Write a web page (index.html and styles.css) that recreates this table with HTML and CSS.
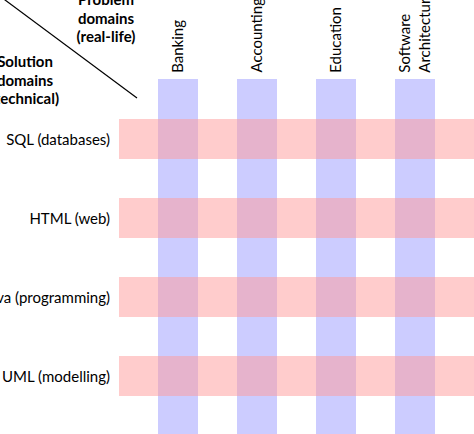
FILE: index.html
```html
<!DOCTYPE html>
<html lang="en">
<head>
<meta charset="utf-8">
<title>Problem vs solution domains</title>
<link rel="stylesheet" href="styles.css">
</head>
<body>
<div class="chart">
  <div class="corner">
    <svg class="diag" width="140" height="100" viewBox="0 0 140 100" aria-hidden="true">
      <line x1="-1" y1="-4.5" x2="137" y2="98" stroke="#000" stroke-width="1.2"/>
    </svg>
    <div class="head head-problem">Problem<br>domains<br>(real-life)</div>
    <div class="head head-solution">Solution<br>domains<br>(technical)</div>
  </div>
  <div class="col-heads">
    <div class="col-head"><span>Banking</span></div>
    <div class="col-head"><span>Accounting</span></div>
    <div class="col-head"><span>Education</span></div>
    <div class="col-head"><span>Software<br>Architecture</span></div>
  </div>
  <div class="row-heads">
    <div class="row-head">SQL (databases)</div>
    <div class="row-head">HTML (web)</div>
    <div class="row-head">Java (programming)</div>
    <div class="row-head">UML (modelling)</div>
  </div>
  <div class="matrix">
    <div class="cols">
      <div class="col"></div>
      <div class="col"></div>
      <div class="col"></div>
      <div class="col"></div>
    </div>
    <div class="rows">
      <div class="row"></div>
      <div class="row"></div>
      <div class="row"></div>
      <div class="row"></div>
    </div>
  </div>
</div>
</body>
</html>
```

FILE: styles.css
```css
html, body {
  margin: 0;
  background: #fff;
}
body {
  font-family: Lato, "DejaVu Sans", sans-serif;
  color: #000;
  overflow: hidden;
  width: 474px;
  height: 434px;
}
.chart {
  display: grid;
  grid-template-columns: 119px 355px;
  grid-template-rows: 79px 355px;
}
.corner {
  position: relative;
  height: 79px;
  display: flex;
  flex-direction: column;
  align-items: flex-start;
}
.diag {
  position: absolute;
  left: 0;
  top: 0;
  overflow: visible;
}
.head {
  font-weight: bold;
  font-size: 15px;
  line-height: 18.5px;
  text-align: center;
  width: 90px;
  white-space: nowrap;
  flex-shrink: 0;
}
.head-problem {
  margin-top: -10px;
  margin-left: 61px;
}
.head-solution {
  margin-top: 6.5px;
  margin-left: -20px;
}
.col-heads {
  display: flex;
  gap: 39.5px;
  padding-left: 39px;
  padding-bottom: 6px;
  align-items: flex-end;
  height: 79px;
  box-sizing: border-box;
}
.col-head {
  width: 39.5px;
  display: flex;
  justify-content: center;
  flex-shrink: 0;
}
.col-head span {
  writing-mode: vertical-rl;
  transform: rotate(180deg);
  font-size: 15px;
  line-height: 19.5px;
  white-space: nowrap;
}
.row-heads {
  display: flex;
  flex-direction: column;
  gap: 39.5px;
  padding-top: 40px;
}
.row-head {
  height: 39.5px;
  display: flex;
  align-items: center;
  justify-content: flex-end;
  padding-right: 9px;
  white-space: nowrap;
  font-size: 15px;
}
.matrix {
  display: grid;
}
.cols, .rows {
  grid-area: 1 / 1;
}
.cols {
  display: flex;
  gap: 39.5px;
  padding-left: 39px;
}
.col {
  width: 39.5px;
  background: #ccccff;
  flex-shrink: 0;
}
.rows {
  display: flex;
  flex-direction: column;
  gap: 39.5px;
  padding-top: 40px;
}
.row {
  height: 39.5px;
  background: rgba(255, 153, 153, 0.5);
}
```
